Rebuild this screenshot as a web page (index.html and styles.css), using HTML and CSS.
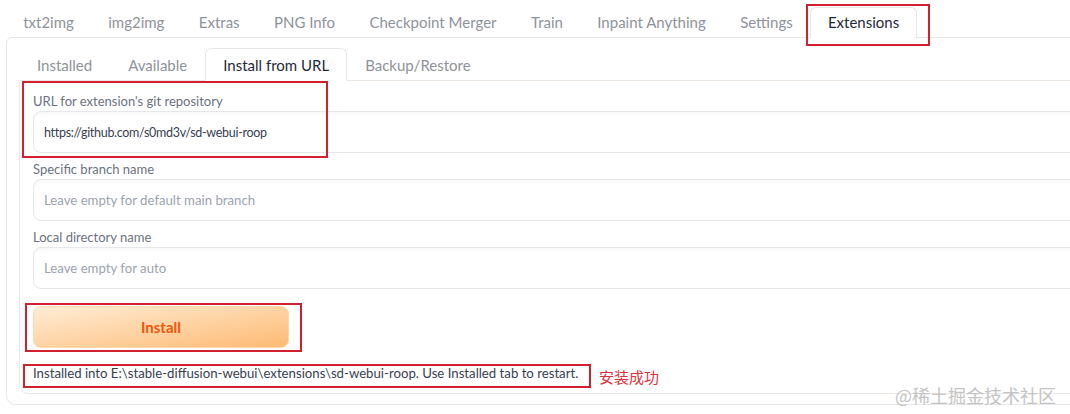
FILE: index.html
```html
<!DOCTYPE html>
<html lang="en">
<head>
<meta charset="utf-8">
<title>Extensions</title>
<link rel="stylesheet" href="styles.css">
</head>
<body>
<div class="app">
  <nav class="tabs top-tabs">
    <button class="tab">txt2img</button>
    <button class="tab">img2img</button>
    <button class="tab">Extras</button>
    <button class="tab">PNG Info</button>
    <button class="tab">Checkpoint Merger</button>
    <button class="tab">Train</button>
    <button class="tab">Inpaint Anything</button>
    <button class="tab">Settings</button>
    <button class="tab active">Extensions</button>
  </nav>
  <div class="outer">
    <nav class="tabs inner-tabs">
      <button class="tab">Installed</button>
      <button class="tab">Available</button>
      <button class="tab active">Install from URL</button>
      <button class="tab">Backup/Restore</button>
    </nav>
    <div class="inner">
      <div class="field">
        <label class="label">URL for extension's git repository</label>
        <div class="input value">https://github.com/s0md3v/sd-webui-roop</div>
      </div>
      <div class="field">
        <label class="label">Specific branch name</label>
        <div class="input placeholder">Leave empty for default main branch</div>
      </div>
      <div class="field">
        <label class="label">Local directory name</label>
        <div class="input placeholder">Leave empty for auto</div>
      </div>
      <button class="install">Install</button>
      <p class="msg">Installed into E:\stable-diffusion-webui\extensions\sd-webui-roop. Use Installed tab to restart.</p>
    </div>
  </div>
</div>

<div class="mark mark-ext"></div>
<div class="mark mark-url"></div>
<div class="mark mark-btn"></div>
<div class="mark mark-msg"></div>
<div class="note">安装成功</div>
<div class="watermark">@稀土掘金技术社区</div>
</body>
</html>
```

FILE: styles.css
```css
* { box-sizing: border-box; }
html, body { margin: 0; padding: 0; background: #fff; }
body {
  width: 1070px;
  height: 414px;
  overflow: hidden;
  position: relative;
  font-family: Lato, "Noto Sans", "Noto Sans CJK SC", sans-serif;
}
.app { width: 1120px; }

.tabs { display: flex; align-items: flex-end; }
.tab {
  font-family: inherit;
  background: none;
  border: 1px solid transparent;
  border-bottom: none;
  padding: 0 17px;
  color: #8e939b;
  cursor: pointer;
  margin: 0;
}
.tab.active {
  background: #fff;
  color: #1f2937;
  border-color: #e5e7eb;
  border-radius: 6px 6px 0 0;
  position: relative;
  margin-bottom: -1px;
}

.top-tabs { padding: 7px 0 0 6px; }
.top-tabs .tab { height: 30px; font-size: 15px; padding: 0 16.2px 2px; }
.top-tabs .tab.active { height: 31px; padding: 0 17px 3px; }

.outer {
  margin-left: 6px;
  border: 1px solid #e5e7eb;
  border-radius: 6px 0 0 9px;
  padding: 10px 0 10px 12px;
}
.inner-tabs .tab { height: 32px; font-size: 15px; }
.inner-tabs .tab.active { height: 33px; padding-bottom: 1px; }

.inner {
  border: 1px solid #ece7e2;
  border-radius: 0 0 0 9px;
  padding: 11px 0 11px 13px;
  display: flex;
  flex-direction: column;
}
.field { display: flex; flex-direction: column; gap: 1px; margin-bottom: 7px; }
.label {
  font-size: 13px;
  line-height: 18px;
  height: 18px;
  color: #6b7280;
}
.input {
  height: 42px;
  border: 1px solid #e5e7eb;
  border-radius: 8px;
  box-shadow: inset 0 2px 3px rgba(0,0,0,0.04);
  padding: 0 10px;
  display: flex;
  align-items: center;
  font-size: 13.5px;
}
.value { color: #374151; font-size: 12.5px; letter-spacing: -0.3px; }
.placeholder { color: #9ca3af; font-size: 13.2px; }

.install {
  margin-top: 10px;
  width: 256px;
  height: 42px;
  border: 1px solid #fed7aa;
  border-radius: 8px;
  background: linear-gradient(to bottom right, #ffedd5, #fdba74);
  color: #ea580c;
  font-family: inherit;
  font-weight: 700;
  font-size: 15px;
}
.msg {
  margin: 16px 0 0;
  font-size: 13.2px;
  line-height: 18px;
  color: #374151;
}

.mark {
  position: absolute;
  border: 2px solid #d3202f;
}
.mark-ext { left: 806px; top: 4px; width: 124px; height: 42px; }
.mark-url { left: 22px; top: 81px; width: 306px; height: 77px; }
.mark-btn { left: 25px; top: 303px; width: 277px; height: 49px; }
.mark-msg { left: 23px; top: 364px; width: 568px; height: 24px; }
.note {
  position: absolute;
  left: 599px;
  top: 367px;
  font-family: "Noto Sans CJK SC", sans-serif;
  font-size: 15px;
  line-height: 20px;
  color: #e0323c;
}
.watermark {
  position: absolute;
  left: 895px;
  top: 383px;
  font-family: "Noto Sans CJK SC", sans-serif;
  font-size: 18px;
  line-height: 24px;
  color: #c4c4c4;
}
```
